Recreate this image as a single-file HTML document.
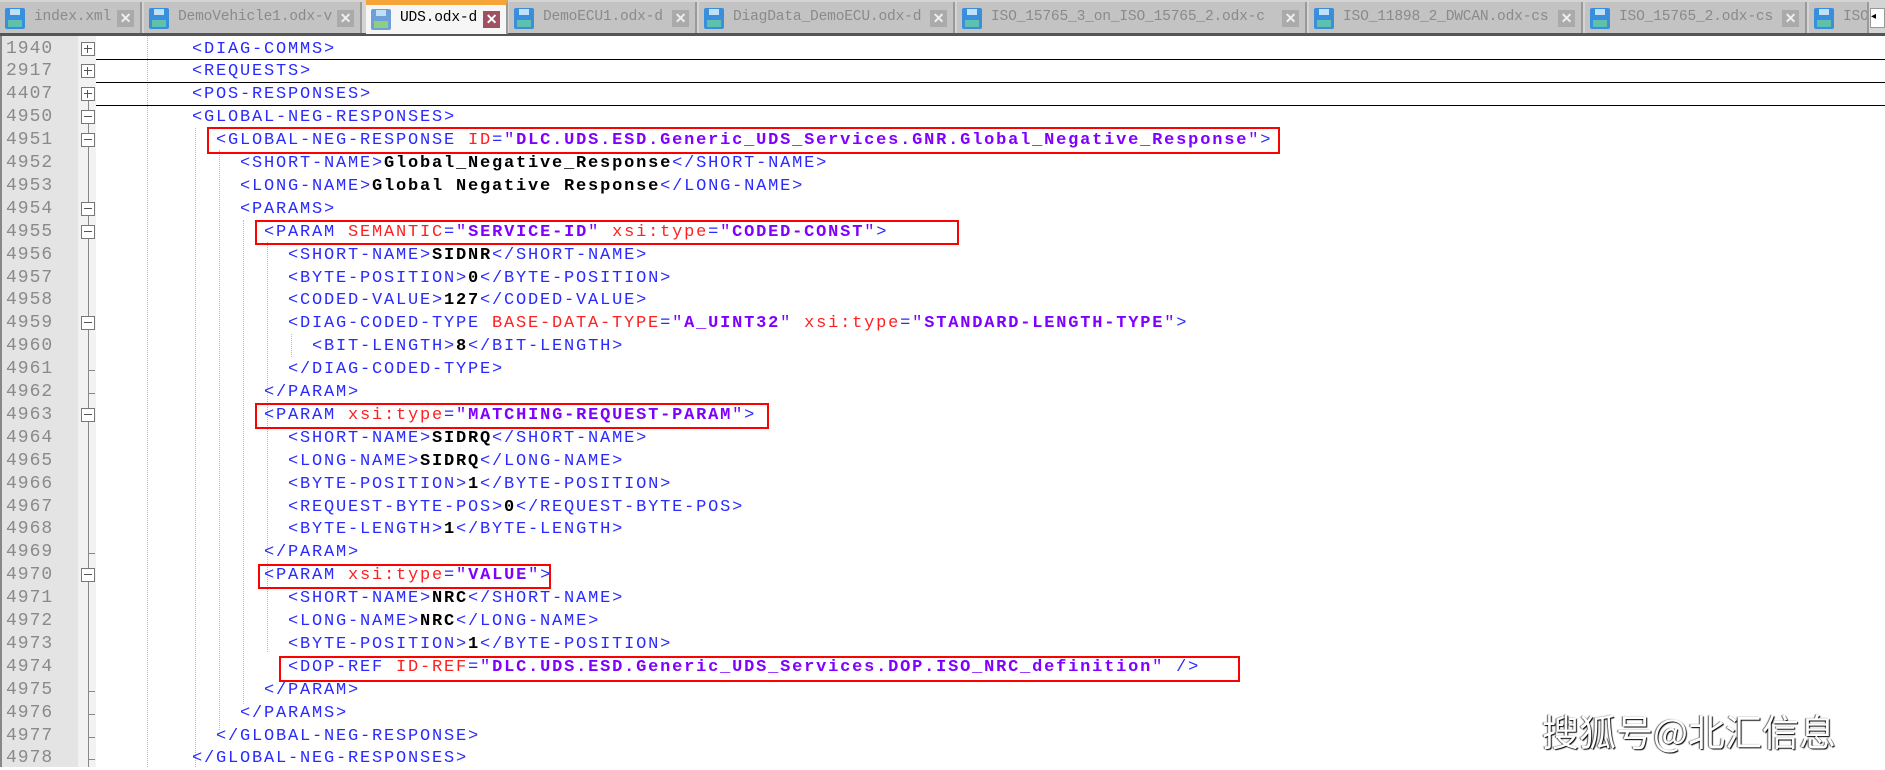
<!DOCTYPE html>
<html><head><meta charset="utf-8"><style>
*{margin:0;padding:0;box-sizing:border-box}
body{width:1885px;height:767px;overflow:hidden;background:#fff;position:relative;font-family:"Liberation Mono",monospace}
#tabs{position:absolute;left:0;top:0;width:1885px;height:36px;background:#d4d4d4;border-bottom:3px solid #555}
.tab{position:absolute;top:2px;height:31px;background:#c3c3c3;border-right:2px solid #9a9a9a;font-family:"Liberation Mono","Noto Serif CJK SC",monospace;font-size:14.6px;letter-spacing:-0.2px;color:#8a8a8a;white-space:nowrap;overflow:hidden}
.tab .ic{position:absolute;left:5px;top:6px;width:20px;height:21px;background:#3a8fdc;border-radius:2px}
.tab .ic:before{content:"";position:absolute;left:5px;top:1px;width:10px;height:6px;background:#bfe0f8}
.tab .ic:after{content:"";position:absolute;left:3px;top:12px;width:14px;height:7px;background:#5fc0b0}
.tab .tx{position:absolute;left:34px;top:7px}
.tab .x{position:absolute;right:6px;top:8px;width:17px;height:17px;background:#aaa;color:#eee;font:bold 14px/17px "Liberation Sans",sans-serif;text-align:center;z-index:1}
.tab.act{background:#f6f6f6;color:#000;top:0;height:34px;border-top:5px solid #f6a43a}
.tab.act .ic{background:#6e9fd6;top:4px}.tab.act .ic:after{background:#8ad080}
.tab.act .tx{top:5px}.tab.act .x{background:#a05060;color:#fff;top:6px}
#gut{position:absolute;left:0;top:36px;width:78px;height:731px;background:#e4e4e4;border-left:2px solid #888}
#fold{position:absolute;left:78px;top:36px;width:18px;height:731px;background:#f2f2f2}
.ln{position:absolute;left:6px;width:60px;font-size:18px;color:#8a8a8a;letter-spacing:1px;line-height:23px}
.code{position:absolute;font-size:17px;letter-spacing:1.8px;line-height:23px;white-space:pre;color:#2a2aff}
.a{color:#ff2020}.v{color:#8000ff;font-weight:bold}.b{color:#000;font-weight:bold}.q{color:#8000ff}
.fb{position:absolute;left:81px;width:14px;height:14px;border:1px solid #777;background:#fff}
.fb:before{content:"";position:absolute;left:2px;top:5px;width:8px;height:1px;background:#555}
.fb.p:after{content:"";position:absolute;left:5px;top:2px;width:1px;height:8px;background:#555}
.hl{position:absolute;left:96px;right:0;height:1px;background:#000}
.rb{position:absolute;border:2px solid #f00}
.g{position:absolute;width:1px;border-left:1px dotted #bbb}
#wm{position:absolute;left:1542px;top:703px;font-family:"Noto Sans CJK SC",sans-serif;font-size:37px;color:#fff;letter-spacing:0px;text-shadow:1px 1px 1px #000,-1px 0 1px #555;white-space:nowrap}
</style></head><body>
<div id="tabs">
<div class="tab" style="left:0;width:142px"><div class="ic"></div><span class="tx">index.xml</span><span class="x">✕</span></div>
<div class="tab" style="left:144px;width:218px"><div class="ic"></div><span class="tx">DemoVehicle1.odx-v</span><span class="x">✕</span></div>
<div class="tab act" style="left:366px;width:142px"><div class="ic"></div><span class="tx">UDS.odx-d</span><span class="x">✕</span></div>
<div class="tab" style="left:509px;width:188px"><div class="ic"></div><span class="tx">DemoECU1.odx-d</span><span class="x">✕</span></div>
<div class="tab" style="left:699px;width:256px"><div class="ic"></div><span class="tx">DiagData_DemoECU.odx-d</span><span class="x">✕</span></div>
<div class="tab" style="left:957px;width:350px"><div class="ic"></div><span class="tx">ISO_15765_3_on_ISO_15765_2.odx-c</span><span class="x">✕</span></div>
<div class="tab" style="left:1309px;width:274px"><div class="ic"></div><span class="tx">ISO_11898_2_DWCAN.odx-cs</span><span class="x">✕</span></div>
<div class="tab" style="left:1585px;width:222px"><div class="ic"></div><span class="tx">ISO_15765_2.odx-cs</span><span class="x">✕</span></div>
<div class="tab" style="left:1809px;width:60px"><div class="ic"></div><span class="tx">ISO</span></div>
<div style="position:absolute;left:1870px;top:8px;width:15px;height:20px;background:#fff;border:1px solid #999;font-size:10px;line-height:18px">◂</div>
</div>
<div id="gut"></div><div id="fold"></div>
<div style="position:absolute;left:88px;top:100px;width:1px;height:667px;background:#888"></div>
<div class="g" style="left:147px;top:36px;height:731px"></div>
<div class="g" style="left:195px;top:128px;height:639px"></div>
<div class="g" style="left:219px;top:150px;height:580px"></div>
<div class="g" style="left:243px;top:220px;height:484px"></div>
<div class="g" style="left:267px;top:242px;height:410px"></div>
<div class="g" style="left:291px;top:334px;height:23px"></div>
<div class="hl" style="top:59px"></div><div class="hl" style="top:82px"></div><div class="hl" style="top:105px"></div>
<div id="lines"></div>
<div class="rb" style="left:207px;top:127px;width:1073px;height:27px"></div>
<div class="rb" style="left:255px;top:220px;width:704px;height:25px"></div>
<div class="rb" style="left:255px;top:403px;width:514px;height:26px"></div>
<div class="rb" style="left:258px;top:564px;width:293px;height:25px"></div>
<div class="rb" style="left:279px;top:656px;width:961px;height:26px"></div>
<div id="wm">搜狐号@北汇信息</div>
<script>
var L=[
[1940,0,'p','&lt;DIAG-COMMS&gt;'],
[2917,0,'p','&lt;REQUESTS&gt;'],
[4407,0,'p','&lt;POS-RESPONSES&gt;'],
[4950,0,'m','&lt;GLOBAL-NEG-RESPONSES&gt;'],
[4951,1,'m','&lt;GLOBAL-NEG-RESPONSE <span class="a">ID</span>=<span class="q">"</span><span class="v">DLC.UDS.ESD.Generic_UDS_Services.GNR.Global_Negative_Response</span><span class="q">"</span>&gt;'],
[4952,2,'','&lt;SHORT-NAME&gt;<span class="b">Global_Negative_Response</span>&lt;/SHORT-NAME&gt;'],
[4953,2,'','&lt;LONG-NAME&gt;<span class="b">Global Negative Response</span>&lt;/LONG-NAME&gt;'],
[4954,2,'m','&lt;PARAMS&gt;'],
[4955,3,'m','&lt;PARAM <span class="a">SEMANTIC</span>=<span class="q">"</span><span class="v">SERVICE-ID</span><span class="q">"</span> <span class="a">xsi:type</span>=<span class="q">"</span><span class="v">CODED-CONST</span><span class="q">"</span>&gt;'],
[4956,4,'','&lt;SHORT-NAME&gt;<span class="b">SIDNR</span>&lt;/SHORT-NAME&gt;'],
[4957,4,'','&lt;BYTE-POSITION&gt;<span class="b">0</span>&lt;/BYTE-POSITION&gt;'],
[4958,4,'','&lt;CODED-VALUE&gt;<span class="b">127</span>&lt;/CODED-VALUE&gt;'],
[4959,4,'m','&lt;DIAG-CODED-TYPE <span class="a">BASE-DATA-TYPE</span>=<span class="q">"</span><span class="v">A_UINT32</span><span class="q">"</span> <span class="a">xsi:type</span>=<span class="q">"</span><span class="v">STANDARD-LENGTH-TYPE</span><span class="q">"</span>&gt;'],
[4960,5,'','&lt;BIT-LENGTH&gt;<span class="b">8</span>&lt;/BIT-LENGTH&gt;'],
[4961,4,'e','&lt;/DIAG-CODED-TYPE&gt;'],
[4962,3,'e','&lt;/PARAM&gt;'],
[4963,3,'m','&lt;PARAM <span class="a">xsi:type</span>=<span class="q">"</span><span class="v">MATCHING-REQUEST-PARAM</span><span class="q">"</span>&gt;'],
[4964,4,'','&lt;SHORT-NAME&gt;<span class="b">SIDRQ</span>&lt;/SHORT-NAME&gt;'],
[4965,4,'','&lt;LONG-NAME&gt;<span class="b">SIDRQ</span>&lt;/LONG-NAME&gt;'],
[4966,4,'','&lt;BYTE-POSITION&gt;<span class="b">1</span>&lt;/BYTE-POSITION&gt;'],
[4967,4,'','&lt;REQUEST-BYTE-POS&gt;<span class="b">0</span>&lt;/REQUEST-BYTE-POS&gt;'],
[4968,4,'','&lt;BYTE-LENGTH&gt;<span class="b">1</span>&lt;/BYTE-LENGTH&gt;'],
[4969,3,'e','&lt;/PARAM&gt;'],
[4970,3,'m','&lt;PARAM <span class="a">xsi:type</span>=<span class="q">"</span><span class="v">VALUE</span><span class="q">"</span>&gt;'],
[4971,4,'','&lt;SHORT-NAME&gt;<span class="b">NRC</span>&lt;/SHORT-NAME&gt;'],
[4972,4,'','&lt;LONG-NAME&gt;<span class="b">NRC</span>&lt;/LONG-NAME&gt;'],
[4973,4,'','&lt;BYTE-POSITION&gt;<span class="b">1</span>&lt;/BYTE-POSITION&gt;'],
[4974,4,'','&lt;DOP-REF <span class="a">ID-REF</span>=<span class="q">"</span><span class="v">DLC.UDS.ESD.Generic_UDS_Services.DOP.ISO_NRC_definition</span><span class="q">"</span> /&gt;'],
[4975,3,'e','&lt;/PARAM&gt;'],
[4976,2,'e','&lt;/PARAMS&gt;'],
[4977,1,'e','&lt;/GLOBAL-NEG-RESPONSE&gt;'],
[4978,0,'e','&lt;/GLOBAL-NEG-RESPONSES&gt;']];
var h='';
L.forEach(function(r,i){var y=37.5+i*22.9;
h+='<div class="ln" style="top:'+y+'px">'+r[0]+'</div>';
h+='<div class="code" style="left:'+(192+24*r[1])+'px;top:'+y+'px">'+r[3]+'</div>';
if(r[2]=='p'||r[2]=='m')h+='<div class="fb '+(r[2]=='p'?'p':'')+'" style="top:'+(y+4)+'px"></div>';
if(r[2]=='e')h+='<div style="position:absolute;left:88px;width:7px;height:1px;background:#888;top:'+(y+12)+'px"></div>';
});
document.getElementById('lines').innerHTML=h;
</script>
</body></html>
